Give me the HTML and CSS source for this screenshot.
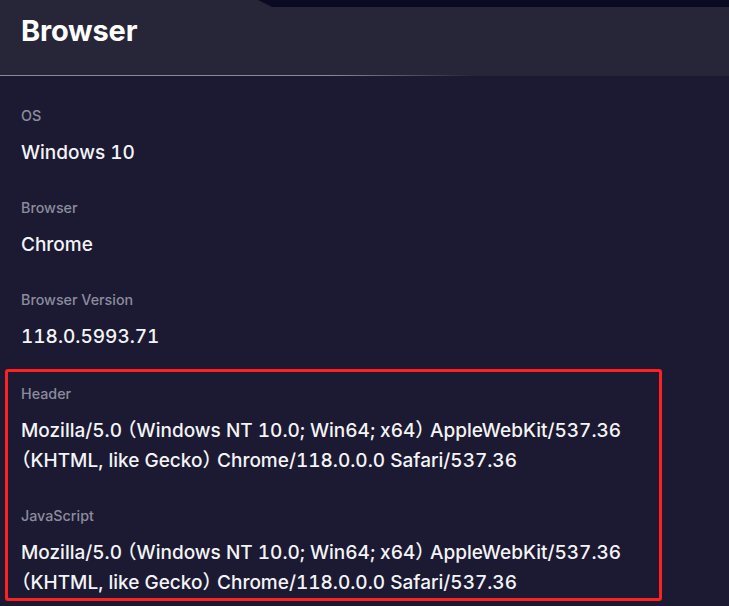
FILE: index.html
```html
<!DOCTYPE html>
<html lang="en">
<head>
<meta charset="utf-8">
<title>Browser</title>
<link rel="stylesheet" href="styles.css">
</head>
<body>
<div class="page">
  <header class="header">
    <div class="strip"></div>
    <h1 class="title">Browser</h1>
    <div class="rule"></div>
  </header>
  <main class="content">
    <div class="item">
      <div class="label">OS</div>
      <div class="value">Windows 10</div>
    </div>
    <div class="item">
      <div class="label">Browser</div>
      <div class="value">Chrome</div>
    </div>
    <div class="item">
      <div class="label">Browser Version</div>
      <div class="value">118.0.5993.71</div>
    </div>
    <div class="highlight">
      <div class="item">
        <div class="label">Header</div>
        <div class="value">Mozilla/5.0 （Windows NT 10.0; Win64; x64） AppleWebKit/537.36 （KHTML, like Gecko） Chrome/118.0.0.0 Safari/537.36</div>
      </div>
      <div class="item">
        <div class="label">JavaScript</div>
        <div class="value">Mozilla/5.0 （Windows NT 10.0; Win64; x64） AppleWebKit/537.36 （KHTML, like Gecko） Chrome/118.0.0.0 Safari/537.36</div>
      </div>
    </div>
  </main>
</div>
</body>
</html>
```
FILE: styles.css
```css
html, body {
  margin: 0;
  padding: 0;
}
body {
  background: #1b1a32;
  font-family: "Inter", "Noto Sans CJK SC", sans-serif;
  color: #f4f4f6;
  width: 729px;
  height: 606px;
  overflow: hidden;
}
.page {
  display: flex;
  flex-direction: column;
}
.header {
  background: #262638;
  display: flex;
  flex-direction: column;
}
.strip {
  height: 7px;
  background: #0a0a23;
  clip-path: polygon(258px 0, 100% 0, 100% 100%, 272px 100%);
}
.title {
  margin: 6px 0 26px 21px;
  font-size: 29px;
  line-height: 36px;
  font-weight: 700;
  color: #ffffff;
  letter-spacing: -0.2px;
}
.rule {
  height: 1px;
  background: linear-gradient(to right, #8a8a9d 0%, #8a8a9d 45%, rgba(138,138,157,0) 65%);
}
.content {
  display: flex;
  flex-direction: column;
  padding-top: 30px;
}
.item {
  display: flex;
  flex-direction: column;
  gap: 12px;
  padding-left: 21px;
  padding-bottom: 30px;
}
.label {
  font-size: 14.3px;
  line-height: 20px;
  font-weight: 500;
  color: #8d8c9d;
}
.value {
  font-size: 19px;
  line-height: 30px;
  font-weight: 500;
  color: #f4f4f6;
  font-feature-settings: "halt" 1, "tnum" 1;
}
.highlight {
  margin: -13px 0 0 5px;
  width: 651px;
  border: 3px solid #ff2020;
  border-radius: 3px;
  padding-top: 12px;
  display: flex;
  flex-direction: column;
}
.highlight .item {
  padding-left: 13px;
  padding-right: 10px;
}
.highlight .item:last-child {
  padding-bottom: 0;
}
```
